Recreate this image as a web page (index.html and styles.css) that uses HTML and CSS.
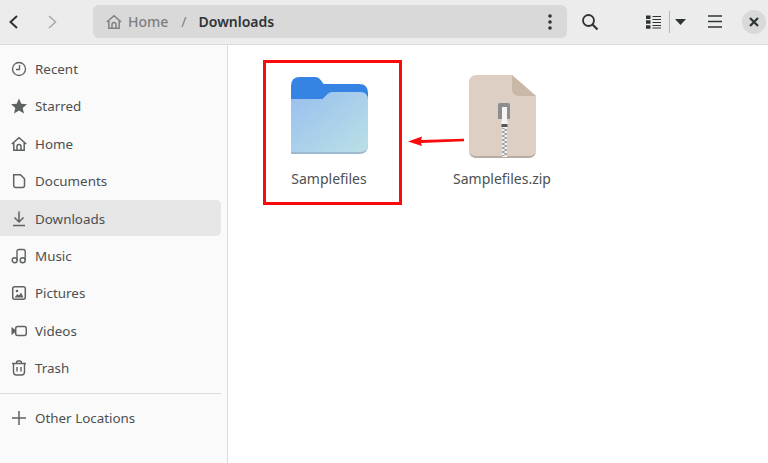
FILE: index.html
```html
<!DOCTYPE html>
<html lang="en">
<head>
    <meta charset="UTF-8">
    <meta name="viewport" content="width=device-width, initial-scale=1.0">
    <title>Downloads</title>
    <link rel="stylesheet" href="styles.css">
</head>
<body>
    <header class="toolbar">
        <div class="nav">
            <svg class="nav-icon" width="16" height="16" viewBox="0 0 16 16"><path d="M11 2 L4.500 8 L11 14" fill="none" stroke="#2e3436" stroke-width="2"/></svg>
            <svg class="nav-icon" width="16" height="16" viewBox="0 0 16 16"><path d="M5 2 L11.500 8 L5 14" fill="none" stroke="#a9abab" stroke-width="1.600"/></svg>
        </div>
        <div class="pathbar">
            <svg class="path-home" width="16" height="16" viewBox="0 0 16 16"><path d="M0.800 8 L8 1.800 L15.200 8 M2.800 7 V14.300 H13.200 V7 M6 14.300 V10.500 A2 2 0 0 1 10 10.500 V14.300" fill="none" stroke="#7f8282" stroke-width="1.500"/></svg>
            <span class="crumb">Home</span>
            <span class="sep">/</span>
            <span class="crumb-current">Downloads</span>
            <svg class="path-menu" width="4" height="16" viewBox="0 0 4 16"><circle cx="2" cy="2" r="1.800" fill="#2e3436"/><circle cx="2" cy="8" r="1.800" fill="#2e3436"/><circle cx="2" cy="14" r="1.800" fill="#2e3436"/></svg>
        </div>
        <div class="tools">
            <svg class="tool-search" width="18" height="18" viewBox="0 0 18 18"><circle cx="7.500" cy="7.500" r="5.500" fill="none" stroke="#2e3436" stroke-width="1.800"/><path d="M11.500 11.500 L16.500 16.500" stroke="#2e3436" stroke-width="2.200"/></svg>
            <div class="view-switch">
                <svg width="15" height="14" viewBox="0 0 15 14"><path d="M0 0.500 H4.500 V4 H0 Z M0 5.300 H4.500 V8.800 H0 Z M0 10.200 H4.500 V13.700 H0 Z" fill="#2e3436"/><path d="M6.500 1.500 H15 M6.500 4.500 H15 M6.500 7.500 H15 M6.500 10.500 H15 M6.500 13 H15" stroke="#2e3436" stroke-width="1.200"/></svg>
                <span class="divider"></span>
                <svg width="11" height="6" viewBox="0 0 11 6"><path d="M0 0 H11 L5.500 6 Z" fill="#2e3436"/></svg>
            </div>
            <svg class="tool-menu" width="14" height="13" viewBox="0 0 14 13"><path d="M0 1 H14 M0 6.500 H14 M0 12 H14" stroke="#2e3436" stroke-width="1.700"/></svg>
            <div class="close-btn">
                <svg width="10" height="10" viewBox="0 0 10 10"><path d="M1 1 L9 9 M9 1 L1 9" stroke="#2e3436" stroke-width="2.200"/></svg>
            </div>
        </div>
    </header>

    <div class="main">
        <nav class="sidebar">
            <a class="place">
                <svg width="16" height="16" viewBox="0 0 16 16"><circle cx="8" cy="8" r="6.500" fill="none" stroke="#5e6262" stroke-width="1.300"/><path d="M8.500 4 V8.500 H5" fill="none" stroke="#5e6262" stroke-width="1.300"/></svg>
                Recent
            </a>
            <a class="place">
                <svg width="16" height="16" viewBox="0 0 16 16"><path d="M8 0.500 L10.300 5.700 L16 6.200 L11.700 10 L13 15.500 L8 12.600 L3 15.500 L4.300 10 L0 6.200 L5.700 5.700 Z" fill="#5e6262"/></svg>
                Starred
            </a>
            <a class="place">
                <svg width="16" height="16" viewBox="0 0 16 16"><path d="M0.800 8 L8 1.800 L15.200 8 M2.800 7 V14.300 H13.200 V7 M6 14.300 V10.500 A2 2 0 0 1 10 10.500 V14.300" fill="none" stroke="#5e6262" stroke-width="1.500"/></svg>
                Home
            </a>
            <a class="place">
                <svg width="16" height="16" viewBox="0 0 16 16"><path d="M2.700 1.700 H9.500 L13.500 5.700 V12.500 A2 2 0 0 1 11.500 14.500 H4.700 A2 2 0 0 1 2.700 12.500 Z" fill="none" stroke="#5e6262" stroke-width="1.500"/></svg>
                Documents
            </a>
            <a class="place active">
                <svg width="16" height="16" viewBox="0 0 16 16"><path d="M8 0.500 V10.500 M3.500 6.500 L8 11 L12.500 6.500 M2 14.500 H14" fill="none" stroke="#5e6262" stroke-width="1.500"/></svg>
                Downloads
            </a>
            <a class="place">
                <svg width="16" height="16" viewBox="0 0 16 16"><circle cx="3.700" cy="12.300" r="2.500" fill="none" stroke="#5e6262" stroke-width="1.400"/><circle cx="11.700" cy="12.300" r="2.500" fill="none" stroke="#5e6262" stroke-width="1.400"/><path d="M6 12.300 V3.500 Q6 1.500 8 1.500 H12 Q14.200 1.500 14.200 3.500 V12.300" fill="none" stroke="#5e6262" stroke-width="1.400"/></svg>
                Music
            </a>
            <a class="place">
                <svg width="16" height="16" viewBox="0 0 16 16"><rect x="1.700" y="1.700" width="12.600" height="12.600" rx="2" fill="none" stroke="#5e6262" stroke-width="1.500"/><circle cx="6" cy="6" r="1.300" fill="#5e6262"/><path d="M3.500 12.500 L6.500 9 L8 10.500 L10 7.500 L12.500 12.500 Z" fill="#5e6262"/></svg>
                Pictures
            </a>
            <a class="place">
                <svg width="16" height="16" viewBox="0 0 16 16"><rect x="4.700" y="3.500" width="10.600" height="9" rx="2" fill="none" stroke="#5e6262" stroke-width="1.500"/><path d="M0.500 4 L4.500 7 V9 L0.500 12 Z" fill="#5e6262"/></svg>
                Videos
            </a>
            <a class="place">
                <svg width="16" height="16" viewBox="0 0 16 16"><path d="M1 3.500 H15 M5.500 3 Q5.500 1 7 1 H9 Q10.500 1 10.500 3 M2.500 3.500 V12 Q2.500 15 5.500 15 H10.500 Q13.500 15 13.500 12 V3.500 M6 7 V11.500 M10 7 V11.500" fill="none" stroke="#5e6262" stroke-width="1.400"/></svg>
                Trash
            </a>
            <div class="sidebar-sep"></div>
            <a class="place">
                <svg width="16" height="16" viewBox="0 0 16 16"><path d="M8 1 V15 M1 8 H15" stroke="#5e6262" stroke-width="1.500"/></svg>
                Other Locations
            </a>
        </nav>

        <section class="files">
            <div class="file">
                <svg width="77" height="83" viewBox="0 0 78 83" preserveAspectRatio="none">
                    <defs>
                        <linearGradient id="folderFront" x1="0" y1="0" x2="1" y2="1">
                            <stop offset="0" stop-color="#98bfef"/>
                            <stop offset="1" stop-color="#bbe0e6"/>
                        </linearGradient>
                    </defs>
                    <path d="M0 11 Q0 2 9 2 H24 Q28 2 30 5 L33 9 H69 Q78 9 78 18 V40 H0 Z" fill="#3584e4"/>
                    <path d="M0 60 H78 V70 Q78 79 69 79 H0 Z" fill="#9fb9cf"/>
                    <path d="M0 24 H32 L37 19 Q39 17 42 17 H70 Q78 17 78 25 V69 Q78 77 70 77 H0 Z" fill="url(#folderFront)"/>
                </svg>
                <span class="file-name">Samplefiles</span>
            </div>
            <div class="file">
                <svg width="67" height="83" viewBox="0 0 67 83">
                    <path d="M8 0 H43 L67 21 V75 Q67 83 59 83 H8 Q0 83 0 75 V8 Q0 0 8 0 Z" fill="#decfc4"/>
                    <path d="M0 75 Q0 81 8 81 H59 Q67 81 67 75 V75 Q67 83 59 83 H8 Q0 83 0 75 Z" fill="#b8aca2"/>
                    <path d="M43 0 L67 21 H50 Q43 21 43 14 Z" fill="#c9b8a6"/>
                    <path d="M29 30 Q29 28 31 28 H39 Q41 28 41 30 V44 H29 Z" fill="#8d8d8d"/>
                    <path d="M33 32 H38 V44 L39 50 H32 L33 44 Z" fill="#f4f4f4"/>
                    <rect x="32.500" y="49" width="6" height="3" fill="#555555"/>
                    <path d="M33 52 H38 V82 H33 Z" fill="#f4f4f4"/>
                    <path d="M33 53 L38 55 L33 57 L38 59 L33 61 L38 63 L33 65 L38 67 L33 69 L38 71 L33 73 L38 75 L33 77 L38 79 L33 81" fill="none" stroke="#9a9a9a" stroke-width="1"/>
                </svg>
                <span class="file-name">Samplefiles.zip</span>
            </div>
        </section>
    </div>

    <div class="red-box"></div>
    <svg class="red-arrow" width="58" height="12" viewBox="0 0 58 12"><path d="M0 6.500 L14 1.500 L13 5 L56 3.800 V6.200 L13 8 L14 11 Z" fill="#fa0a0a"/></svg>
</body>
</html>
```

FILE: styles.css
```css
* {
    box-sizing: border-box;
}

body {
    margin: 0;
    height: 463px;
    overflow: hidden;
    font-family: "Noto Sans", sans-serif;
    font-size: 14px;
    color: #4c5050;
    background-color: #fff;
}

.toolbar {
    display: flex;
    align-items: center;
    height: 45px;
    padding: 0 2px 1px 6px;
    background-color: #ececec;
    border-bottom: 1px solid #dcdcdc;
}

.nav {
    display: flex;
    align-items: center;
    gap: 22px;
    width: 87px;
}

.pathbar {
    display: flex;
    align-items: center;
    width: 474px;
    height: 33px;
    padding: 0 15px 0 13px;
    background-color: #d9d9d9;
    border-radius: 6px;
    font-size: 14px;
}

.path-home {
    margin-right: 6px;
}

.crumb {
    color: #7c7f7f;
    font-weight: 500;
}

.sep {
    margin: 0 12px 0 13px;
    color: #7c7f7f;
}

.crumb-current {
    color: #2e3436;
    font-weight: 600;
}

.path-menu {
    margin-left: auto;
}

.tools {
    display: flex;
    align-items: center;
    margin-left: 14px;
}

.tool-search {
    margin-right: 47px;
}

.view-switch {
    display: flex;
    align-items: center;
}

.divider {
    width: 1px;
    height: 22px;
    margin: 0 5px 0 8px;
    background-color: #b8b8b8;
}

.tool-menu {
    margin-left: 22px;
}

.close-btn {
    display: flex;
    align-items: center;
    justify-content: center;
    width: 24px;
    height: 24px;
    margin-left: 20px;
    background-color: #d9d9d9;
    border-radius: 50%;
}

.main {
    display: flex;
    height: 418px;
}

.sidebar {
    width: 228px;
    padding: 5.600px 6px 0 0;
    background-color: #fafafa;
    border-right: 1px solid #dcdcdc;
    font-size: 13.400px;
}

.place {
    display: flex;
    align-items: center;
    gap: 8px;
    height: 36px;
    margin-bottom: 1.400px;
    padding: 1px 0 0 11px;
    border-radius: 0 5px 5px 0;
}

.place.active {
    background-color: #e6e6e6;
}

.sidebar-sep {
    height: 1px;
    margin: 7px 0 6px;
    background-color: #dedede;
}

.files {
    display: flex;
    flex: 1;
    gap: 93px;
    padding: 30px 0 0 61px;
}

.file {
    display: flex;
    flex-direction: column;
    align-items: center;
    width: 80px;
}

.file-name {
    margin-top: 11px;
    white-space: nowrap;
}

.red-box {
    position: absolute;
    left: 263px;
    top: 60px;
    width: 139px;
    height: 145px;
    border: 3px solid #fa0a0a;
}

.red-arrow {
    position: absolute;
    left: 408px;
    top: 135px;
}
```
